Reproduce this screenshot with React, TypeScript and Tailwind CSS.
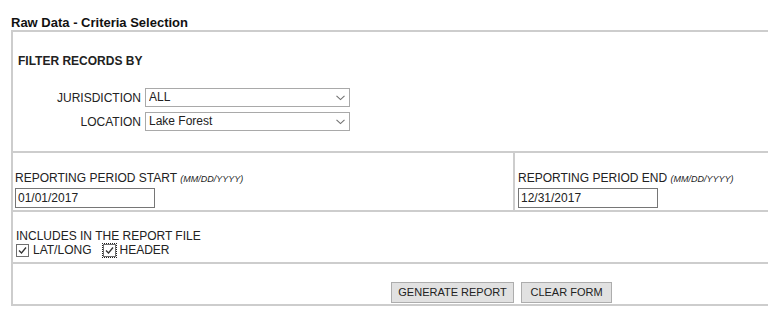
import { useState } from "react";

function Chevron() {
  return (
    <svg width="9" height="6" viewBox="0 0 9 6" className="pointer-events-none absolute right-[5px] top-[7px]">
      <polyline points="0.5,0.8 4.5,4.6 8.5,0.8" fill="none" stroke="#707070" strokeWidth="1.1" />
    </svg>
  );
}

function Check({ checked, focused }: { checked: boolean; focused?: boolean }) {
  return (
    <span
      className={
        "inline-flex h-[13px] w-[13px] items-center justify-center border border-[#6f6f6f] bg-white " +
        (focused ? "outline-1 outline-dotted outline-[#222]" : "")
      }
    >
      {checked && (
        <svg width="11" height="11" viewBox="0 0 11 11">
          <polyline points="2,5.5 4.5,8 9,2.5" fill="none" stroke="#333" strokeWidth="1.3" />
        </svg>
      )}
    </span>
  );
}

export default function App() {
  const [jurisdiction, setJurisdiction] = useState("ALL");
  const [location, setLocation] = useState("Lake Forest");
  const [start, setStart] = useState("01/01/2017");
  const [end, setEnd] = useState("12/31/2017");
  const [latLong, setLatLong] = useState(true);
  const [header, setHeader] = useState(true);

  const font = { fontFamily: '"Liberation Sans", Arial, sans-serif' };

  return (
    <div className="h-[315px] w-full overflow-hidden bg-white text-[#222]" style={font}>
      <div className="pl-[11px] pt-[15px]">
        {/* title */}
        <div className="text-[13px] font-bold leading-[15px] text-[#111]">Raw Data - Criteria Selection</div>

        <div className="w-[1000px] border-2 border-[#cdcdcd]">
          {/* FILTER */}
          <div className="px-[5px] pt-[22px] pb-[20px]">
            <div className="text-[12px] font-bold leading-[14px]">FILTER RECORDS BY</div>
            <div className="mt-[20px] grid grid-cols-[123px_205px] items-center gap-x-[4px] gap-y-[5px] text-[12px]">
              <label className="text-right leading-[14px]">JURISDICTION</label>
              <div className="relative">
                <select
                  value={jurisdiction}
                  onChange={(e) => setJurisdiction(e.target.value)}
                  className="h-[19px] w-[205px] appearance-none border border-[#a9a9a9] bg-white pl-[3px] text-[12px] leading-[17px] outline-none"
                >
                  <option>ALL</option>
                </select>
                <Chevron />
              </div>
              <label className="text-right leading-[14px]">LOCATION</label>
              <div className="relative">
                <select
                  value={location}
                  onChange={(e) => setLocation(e.target.value)}
                  className="h-[19px] w-[205px] appearance-none border border-[#a9a9a9] bg-white pl-[3px] text-[12px] leading-[17px] outline-none"
                >
                  <option>Lake Forest</option>
                </select>
                <Chevron />
              </div>
            </div>
          </div>

          {/* PERIOD */}
          <div className="flex border-t-2 border-[#cdcdcd] text-[12px]">
            <div className="w-[502px] border-r-2 border-[#cdcdcd] pl-[2px] pt-[18px] pb-[2px]">
              <div className="leading-[14px]">
                REPORTING PERIOD START <i className="text-[9px]">(MM/DD/YYYY)</i>
              </div>
              <input
                value={start}
                onChange={(e) => setStart(e.target.value)}
                className="mt-[2px] h-[20px] w-[140px] border border-[#767676] px-[2px] text-[12px] outline-none"
              />
            </div>
            <div className="flex-1 pl-[3px] pt-[18px] pb-[2px]">
              <div className="leading-[14px]">
                REPORTING PERIOD END <i className="text-[9px]">(MM/DD/YYYY)</i>
              </div>
              <input
                value={end}
                onChange={(e) => setEnd(e.target.value)}
                className="mt-[2px] h-[20px] w-[140px] border border-[#767676] px-[2px] text-[12px] outline-none"
              />
            </div>
          </div>

          {/* INCLUDES */}
          <div className="border-t-2 border-[#cdcdcd] pl-[3px] pt-[17px] pb-[5px] text-[12px]">
            <div className="leading-[14px]">INCLUDES IN THE REPORT FILE</div>
            <div className="flex h-[14px] items-center">
              <label className="flex items-center gap-[4px]" onClick={() => setLatLong(!latLong)}>
                <Check checked={latLong} />
                <span className="leading-[14px]">LAT/LONG</span>
              </label>
              <label className="ml-[12px] flex items-center gap-[3px]" onClick={() => setHeader(!header)}>
                <Check checked={header} focused />
                <span className="leading-[14px]">HEADER</span>
              </label>
            </div>
          </div>

          {/* BUTTONS */}
          <div className="flex gap-[7px] border-t-2 border-[#cdcdcd] pl-[378px] pt-[18px] pb-[1px]">
            <button className="h-[21px] w-[123px] border border-[#adadad] bg-[#e1e1e1] text-[11px] text-[#222]">
              GENERATE REPORT
            </button>
            <button className="h-[21px] w-[91px] border border-[#adadad] bg-[#e1e1e1] text-[11px] text-[#222]">
              CLEAR FORM
            </button>
          </div>
        </div>
      </div>
    </div>
  );
}
